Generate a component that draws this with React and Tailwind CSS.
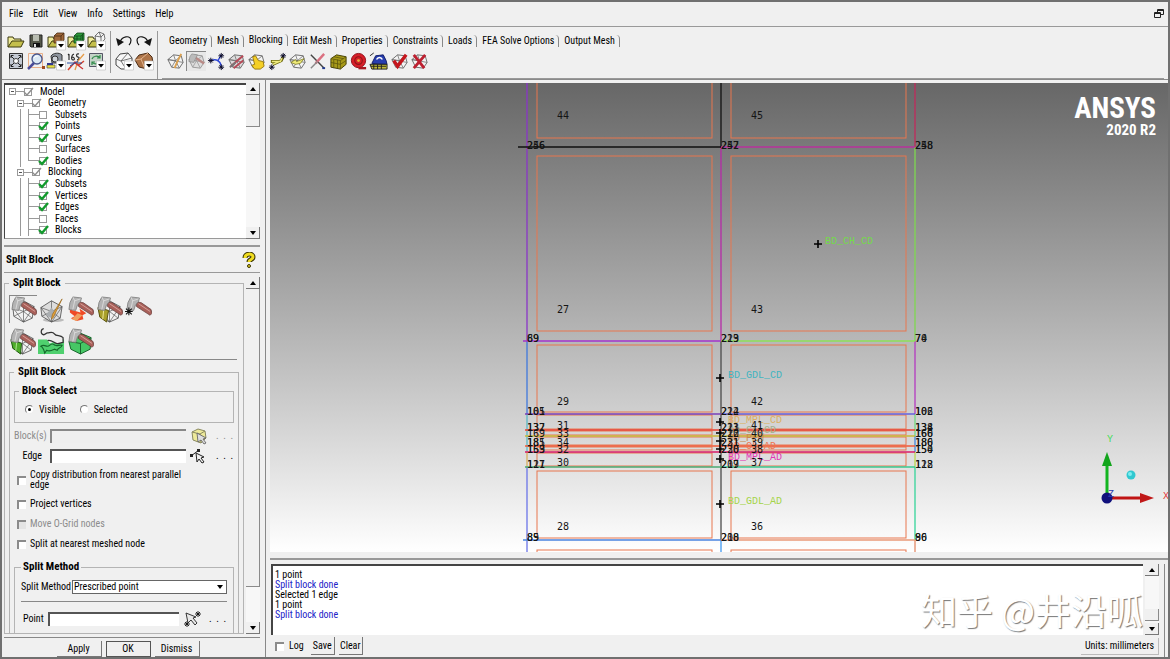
import React from 'react';

const narrow = "font-['Roboto_Condensed','Roboto','Liberation_Sans',sans-serif]";

/* ---------- icon parts ---------- */

const Svg = ({size = 20, box = 20, children}) => (
    <svg width={size} height={size} viewBox={`0 0 ${box} ${box}`} fill="none" className="shrink-0" aria-hidden="true">
        {children}
    </svg>
);

const Wire = ({stroke = '#6b6b6b', fill = '#f4f4f4'}) => (
    <g stroke={stroke} strokeWidth="1" strokeLinejoin="round">
        <path d="M2 8 8 3 16 4 18 11 14 17 6 16Z" fill={fill} />
        <path d="M2 8 10 9 16 4M10 9 14 17M10 9 6 16M2 8 18 11M8 3 10 9" strokeWidth=".8" />
    </g>
);

const Drop = () => (
    <g>
        <path d="M10.500 10h9v9h-9z" fill="#fff" stroke="#bbb" strokeWidth=".6" />
        <path d="M12 13h6l-3 3.500z" fill="#000" />
    </g>
);

const Folder = () => (
    <g stroke="#3c3a10" strokeWidth="1">
        <path d="M2 16V6h5l1 2h7v3" fill="#f0ec9a" />
        <path d="M2 16 6 10h12l-3 6Z" fill="#c4bf4c" />
    </g>
);

const Star = ({x, y}) => (
    <path d={`M${x - 3} ${y}h6M${x} ${y - 3}v6M${x - 2} ${y - 2}l4 4M${x + 2} ${y - 2}l-4 4`} stroke="#0a0a28" strokeWidth="1" />
);

const Hammer = () => (
    <g>
        <path d="m12 6 5 1 10 7 1 4-2 2-14-9z" fill="#a9605a" stroke="#5a3330" strokeWidth=".7" />
        <path d="m14 8 12 8" stroke="#d9a29b" strokeWidth="1" />
        <path d="M6 1 15 2 14 6 11 9 9 15 2 14 3 7Z" fill="#b4b4b4" stroke="#777" strokeWidth=".8" />
        <path d="M6 1 8 5 14 3M8 5 6 14" stroke="#e2e2e2" strokeWidth=".8" />
    </g>
);

const BigWire = ({fill = '#f2f2f2'}) => (
    <g stroke="#555" strokeWidth=".9" strokeLinejoin="round">
        <path d="M3 12 14 5l11 6-2 12-9 4-10-6Z" fill={fill} />
        <path d="m3 12 11 4 11-5M14 16v11M14 5v11M4 21l10-5 9 7M3 12l11 15 11-16" strokeWidth=".7" />
    </g>
);

/* ---------- toolbar icons ---------- */

const OpenIcon = () => <Svg><Folder /></Svg>;

const SaveIcon = () => (
    <Svg>
        <path d="M4 4h12v12H5l-1-1z" fill="#55584a" stroke="#222" />
        <path d="M7 4h6v6H7z" fill="#b8bcb0" />
        <path d="M7 12h7v4H7z" fill="#111" />
        <path d="M8 13h2v3H8z" fill="#ddd" />
    </Svg>
);

const OpenGeometryIcon = () => (
    <Svg>
        <Folder />
        <path d="m8 5 3-3h7v7l-3 3H8z" fill="#a0683a" stroke="#4a2c12" strokeWidth=".8" />
        <path d="M8 5h7v6M15 5l3-3" stroke="#4a2c12" strokeWidth=".8" />
        <Drop />
    </Svg>
);

const OpenMeshIcon = () => (
    <Svg>
        <Folder />
        <path d="m8 5 3-3h7v7l-3 3H8z" fill="#2f9a3c" stroke="#0d4415" strokeWidth=".8" />
        <path d="M8 5h7v6M15 5l3-3M11 5v7M8 8h7M16.500 3.500v7" stroke="#0d4415" strokeWidth=".7" />
        <Drop />
    </Svg>
);

const OpenBlockingIcon = () => (
    <Svg>
        <Folder />
        <path d="m9 5 4-4 5 2 1 5-4 4-5-1zM9 5l6 1 3-3M15 6v6M13 1l2 5" fill="#f5f5f5" stroke="#555" strokeWidth=".8" />
        <Drop />
    </Svg>
);

const FitIcon = () => (
    <Svg>
        <path d="M3.500 2.500h13v15h-13z" fill="#c4cad4" stroke="#333" />
        <circle cx="10" cy="10" r="2.500" fill="#fff" stroke="#444" />
        <path d="m5 5 3 3M15 5l-3 3M5 15l3-3M15 15l-3-3" stroke="#222" />
        <path d="M5 7V4.500h2.500M12.500 4.500H15V7M5 13v2.500h2.500M12.500 15.500H15V13" stroke="#222" />
    </Svg>
);

const ZoomIcon = () => (
    <Svg>
        <path d="M2.500 2.500h14v14h-14z" stroke="#e8b08a" />
        <path d="m8 12-6 6" stroke="#4a4a9a" strokeWidth="2.500" />
        <circle cx="11" cy="8" r="5" fill="#dbe9f5" stroke="#46548c" strokeWidth="1.300" />
        <path d="M8 7c1-2 3-2 4-2" stroke="#fff" />
        <path d="M16 15h3v3h-3z" fill="#a04a20" />
    </Svg>
);

const MeasureIcon = () => (
    <Svg>
        <path d="M5 5c2-3 8-4 11-1v8H6z" fill="#8f96a0" stroke="#333" />
        <circle cx="9" cy="8" r="3" fill="#cfd4da" stroke="#333" />
        <path d="M1 14h8v3H1z" fill="#e8e040" stroke="#555" strokeWidth=".7" />
        <path d="M1 12h6v2H1z" fill="#303890" />
        <Drop />
    </Svg>
);

const AxesIcon = () => (
    <Svg>
        <path d="M3 3v6M2 4l1-1M8 3C5 4 5 9 7 9s2-3-1-3M13 3c-3-1-3 3-1 3s1 3-1 3" stroke="#222" strokeWidth="1.100" />
        <path d="m2 19 7-8 4 3 5-4" stroke="#d8432c" strokeWidth="1.500" />
        <path d="m18 3-6 7-3 9" stroke="#e59b48" strokeWidth="1.300" />
        <path d="M1 12h15M4 15l8-5" stroke="#294fa0" />
        <path d="m9 12 8 6" stroke="#cc3030" strokeWidth="1.200" />
    </Svg>
);

const RefreshIcon = () => (
    <Svg>
        <path d="M3.500 2.500h13v13h-13z" fill="#c4d4c8" stroke="#556" />
        <path d="M6 8c1-3 6-4 8-1M14 4v3h-3M14 10c-1 3-6 4-8 1M6 14v-3h3" stroke="#2f8a49" strokeWidth="1.200" />
        <Drop />
    </Svg>
);

const UndoIcon = ({flip}) => (
    <Svg>
        <g transform={flip ? 'matrix(-1 0 0 1 20 0)' : undefined}>
            <path d="M6 11C8 5 16 4 17 9c0 2-1 4-2 5" stroke="#151515" strokeWidth="1.200" />
            <path d="m2 7 2 8 6-4z" fill="#151515" />
        </g>
    </Svg>
);

const WireViewIcon = () => (
    <Svg>
        <path d="M2 8 6 3l8-1 4 5v6l-5 5H7l-5-4z" fill="#f7f7f7" stroke="#444" />
        <path d="m2 8 5 2 7-8M7 10l5 8M7 10l11-3" stroke="#555" strokeWidth=".8" />
        <Drop />
    </Svg>
);

const SolidViewIcon = () => (
    <Svg>
        <path d="M1 9 5 4l9-2 4 4 1 6-6 6-8-2z" fill="#ad7448" stroke="#4b2d17" />
        <path d="m1 9 6-1 4 10M7 8l7-6" stroke="#e3b48d" />
        <Drop />
    </Svg>
);

/* ---------- blocking tab icons ---------- */

const blockingIcons = [
    {name: 'Create block', art: <><Wire /><path d="m16 2-4 8-3 7" stroke="#d9a050" strokeWidth="2" /></>},
    {name: 'Split block', active: true, art: <><Wire fill="#ddd" stroke="#999" /><path d="m9 6 9 6" stroke="#b98a86" strokeWidth="2.500" /><path d="m5 2 6 1-2 4-2 4-5-1 1-5z" fill="#bbb" stroke="#888" strokeWidth=".7" /></>},
    {name: 'Merge vertices', art: <><path d="M4 9c6-2 10 0 11 6M11 10l4-7" stroke="#3048d8" strokeWidth="1.500" /><Star x={4} y={9} /><Star x={15} y={4} /><Star x={15} y={16} /></>},
    {name: 'Edit block', art: <><Wire fill="#ddd" /><path d="m4 15 13-11M7 17l10-8" stroke="#b84a58" strokeWidth="2" /><path d="m3 16 6-5" stroke="#777" strokeWidth="2" /></>},
    {name: 'Associate', art: <><Wire /><path d="m6 5 3-1 3 5 5 1 1 5-4 3H8l-3-4 3-1z" fill="#f4cf26" stroke="#997a10" /></>},
    {name: 'Move vertex', art: <><path d="M3 10h10M5 13l9-4 2-4" stroke="#6d6a10" strokeWidth="3" /><path d="M4 10h9l2-4M5 13l9-4" stroke="#f0ec80" strokeWidth="1.400" /><Star x={16} y={4} /><Star x={4} y={16} /></>},
    {name: 'Transform blocks', art: <><Wire /><path d="m3 11 5-3 1 2 8-3-4 5-5 1z" fill="#eeea78" stroke="#77741c" strokeWidth=".8" /></>},
    {name: 'Edit edge', art: <><path d="m3 3 14 14" stroke="#444" strokeWidth="1.500" /><path d="M17 2 8 12" stroke="#db7080" strokeWidth="2.500" /><path d="m10 10-7 7" stroke="#888" strokeWidth="1.500" /><path d="M15 16h3v2h-3z" fill="#223c90" /></>},
    {name: 'Pre-mesh parameters', art: <><path d="m2 7 6-4 10 2v8l-6 5-10-2z" fill="#a79a18" stroke="#454006" /><path d="m2 7 10 2 6-4M12 9v9M5 5l10 2M5 8v9M9 8v9M2 11l10 2 6-4" stroke="#5b540b" strokeWidth=".8" /></>},
    {name: 'Pre-mesh quality', art: <><circle cx="10" cy="9" r="7.500" fill="#d81e28" stroke="#8e0d16" /><circle cx="10" cy="9" r="4" stroke="#8b1818" strokeWidth="1.200" /><circle cx="10" cy="9" r="1.500" fill="#e8b03c" /><path d="M10 17h8" stroke="#a81620" strokeWidth="2.500" /></>},
    {name: 'Pre-mesh smooth', art: <><path d="m3 12 4-8 8-1 3 6 1 4z" fill="#283eb0" stroke="#131e66" /><path d="M8 8c1-3 5-3 6 0" stroke="#fff" strokeWidth="1.500" /><path d="M1 13h18v5H3z" fill="#c5bd38" stroke="#222" /><path d="M5 13v5M9 13v5M13 13v5M2 15h16M1 4l4-3" stroke="#222" /></>},
    {name: 'Block checks', art: <><Wire /><path d="m4 9 4 6 9-12" stroke="#c5161d" strokeWidth="3.500" /></>},
    {name: 'Delete block', art: <><Wire /><path d="m4 3 11 14M16 3 4 17" stroke="#bd2030" strokeWidth="3" /></>},
];

/* ---------- split block tools ---------- */

const splitTools = [
    {name: 'Split block', active: true, art: <><BigWire /><Hammer /></>},
    {name: 'Ogrid block', art: <><ellipse cx="16" cy="25" rx="11" ry="2" fill="#bbb" /><BigWire fill="#ddd" /><path d="m8 20 6-8 5 7-5 4z" fill="#a9adb0" /><path d="m25 3-9 19-2 2 1-5z" fill="#e6a53c" stroke="#98661a" strokeWidth=".7" /></>},
    {name: 'Extend split', art: <><path d="M3 14 14 17l-1-4 7 5-4 2 1 4-7 2-6-3 4-2-5-4z" fill="#f04a26" /><path d="m5 24 6-6 5 2-6 6z" fill="#f0a060" /><Hammer /></>},
    {name: 'Split face', art: <><BigWire /><path d="m2 12 11 3-2 12-7-5z" fill="#a9a02a" stroke="#57510f" /><path d="m8 14-1 10" stroke="#eee89a" /><Hammer /></>},
    {name: 'Split vertices', art: <><Hammer /><path d="M0 16h8M4 12v8M1 13l6 6M7 13l-6 6" stroke="#111" strokeWidth="1.100" /></>},
    {name: 'Split free face', art: <><BigWire /><path d="m2 12 11 4-1 11-8-6z" fill="#4fae2c" stroke="#1d5a0e" /><path d="m8 14-1 10" stroke="#b5e89a" /><Hammer /></>},
    {name: 'Imprint face', art: <><path d="M0 12h10l2 4 6-2 3-2h6v15H0z" fill="#4fd06e" /><path d="M6 1c-3-1-4 6 0 6 2 0 2-2 4-2s5-2 7 1 6 1 9 4v5c-3 0-4 2-7 1s-5-4-9-3" fill="#ececec" stroke="#333" strokeWidth="1.300" /><path d="M3 19c4-3 6 2 9-1s4-1 6 0 5-1 7 0c-1 3-4 2-5 5l-3-1c-2 1-5 3-8 1l-2 3c-1-4-2-6-4-7z" stroke="#15682b" strokeWidth="1.200" /></>},
    {name: 'Split 3D block', art: <><path d="m2 14 11-9 12 5-1 12-10 5-10-5z" fill="#46c765" stroke="#16622a" /><path d="m2 14 12 2 11-6M14 16v11" stroke="#16622a" /><Hammer /></>},
];

const SelectEdgeIcon = () => (
    <Svg size={16} box={16}>
        <path d="m1 8 8-6" stroke="#222" />
        <path d="M0 6h3v3H0zM7 1h3v3H7z" fill="#222" />
        <path d="m6 5 8 4-3 1 3 4-2 1-3-4-2 3z" fill="#eee" stroke="#222" />
    </Svg>
);

const SelectBlockIcon = () => (
    <Svg size={18} box={18}>
        <path d="m2 5 6-3 7 2 1 7-5 5-8-3z" fill="#eeea9a" stroke="#8a8960" />
        <path d="m2 5 8 2 5-3M10 7l1 9" stroke="#8a8960" />
        <path d="m7 6 9 5-3 1 3 4-2 1-3-4-3 2z" fill="#ddd" stroke="#666" strokeWidth=".9" />
    </Svg>
);

const SelectPointIcon = () => (
    <Svg size={18} box={18}>
        <path d="M1 14h6M4 11v6M2 12l4 4M6 12l-4 4M12 4h6M15 1v6M13 2l4 4M17 2l-4 4" stroke="#111" strokeWidth=".9" />
        <path d="m3 3 10 4-3 1 4 5-2 2-4-5-3 3z" fill="#e8e8e8" stroke="#222" strokeWidth=".9" />
    </Svg>
);

const HelpIcon = () => (
    <Svg size={16} box={16}>
        <path d="M5 6c0-5 8-5 8-1 0 3-4 2-4 5" stroke="#3a3405" strokeWidth="5" />
        <path d="M5 6c0-5 8-5 8-1 0 3-4 2-4 5" stroke="#f0dc20" strokeWidth="3" />
        <circle cx="9" cy="14" r="1.500" fill="#e6d020" stroke="#3a3405" />
    </Svg>
);

/* ---------- small controls ---------- */

const ScrollBar = ({thumb}) => (
    <div className="flex w-[14px] shrink-0 flex-col bg-[#f7f7f7]">
        <button aria-label="Scroll up" className="grid h-3 w-full shrink-0 place-items-center border-r border-b border-[#777] bg-[#f0f0f0]">
            <svg width="6" height="4" viewBox="0 0 6 4"><path d="M0 4 3 0l3 4z" /></svg>
        </button>
        <div className={`${thumb} border-r border-b border-[#8a8a8a] bg-[#f0f0f0]`} />
        <button aria-label="Scroll down" className="mt-auto grid h-3 w-full shrink-0 place-items-center border-r border-b border-[#777] bg-[#f0f0f0]">
            <svg width="6" height="4" viewBox="0 0 6 4"><path d="m0 0 3 4 3-4z" /></svg>
        </button>
    </div>
);

const Check = ({label, disabled}) => (
    <label className={`flex items-center gap-1 ${disabled ? 'text-[#8c8c8c]' : ''}`}>
        <input
            type="checkbox"
            disabled={disabled}
            className="size-[9px] shrink-0 appearance-none border-t-2 border-l-2 border-[#8b8b8b] bg-white disabled:bg-[#e4e4e4]"
        />
        <span className="w-[164px] leading-[10px]">{label}</span>
    </label>
);

const Radio = ({label, checked}) => (
    <label className="flex items-center gap-[5px]">
        <input
            type="radio"
            name="blockSelect"
            defaultChecked={checked}
            className="grid size-[9px] appearance-none place-items-center rounded-full border border-t-[#777] border-r-[#eee] border-b-[#eee] border-l-[#777] bg-white before:size-[3px] before:rounded-full checked:before:bg-black"
        />
        {label}
    </label>
);

const fieldBox = 'h-[14px] min-w-0 border-t-2 border-l-2 border-[#555] bg-white px-1 outline-none disabled:border-[#888] disabled:bg-[#efefef]';

/* ---------- model tree ---------- */

const tree = [
    {label: 'Model', depth: 0},
    {label: 'Geometry', depth: 1},
    {label: 'Subsets', depth: 2, checked: false},
    {label: 'Points', depth: 2, checked: true},
    {label: 'Curves', depth: 2, checked: true},
    {label: 'Surfaces', depth: 2, checked: false},
    {label: 'Bodies', depth: 2, checked: true, last: true},
    {label: 'Blocking', depth: 1},
    {label: 'Subsets', depth: 2, checked: true},
    {label: 'Vertices', depth: 2, checked: true},
    {label: 'Edges', depth: 2, checked: true},
    {label: 'Faces', depth: 2, checked: false},
    {label: 'Blocks', depth: 2, checked: true},
];

const Expander = () => (
    <span className="flex items-center">
        <span className="grid size-[7px] place-items-center border border-[#999] bg-white">
            <span className="h-px w-[3px] bg-[#555]" />
        </span>
        <span className="h-px w-2 bg-[#999]" />
    </span>
);

const TreeRow = ({node}) => {
    const parent = node.depth < 2;
    return (
        <li className="flex min-h-0 flex-1 items-stretch">
            {node.depth === 0 && <span className="w-1" />}
            {node.depth === 1 && <span className="w-3" />}
            {parent && <Expander />}
            {!parent && (
                <>
                    <span className="ml-[15px] w-2 border-l border-[#999]" />
                    <span className="flex w-[11px] flex-col">
                        <span className="h-1/2 border-b border-l border-[#999]" />
                        <span className={`h-1/2 ${node.last ? '' : 'border-l border-[#999]'}`} />
                    </span>
                </>
            )}
            <label className="flex items-center">
                <span className="relative grid w-2 place-items-center">
                    <input
                        type="checkbox"
                        defaultChecked={parent || node.checked}
                        className="peer size-2 appearance-none border border-[#999] bg-white"
                    />
                    <svg
                        width="12" height="12" viewBox="0 0 12 12" fill="none"
                        className="pointer-events-none absolute hidden peer-checked:block"
                    >
                        <path d="m2 6 3 3 6-7" stroke={parent ? '#8d8d8d' : '#129a2c'} strokeWidth={parent ? 1.4 : 2.4} />
                    </svg>
                </span>
                <span className="ml-2">{node.label}</span>
            </label>
        </li>
    );
};

/* ---------- 3D view ---------- */

const lines = [
    // vertical edges
    [527, 83, 527, 341, '#8a35c8'], [527, 341, 527, 414, '#3f78dc'], [527, 414, 527, 452, '#58b8c8'], [527, 452, 527, 467, '#d8b060'], [527, 467, 527, 552, '#6a74e8'],
    [721, 83, 721, 147, '#111'], [721, 147, 721, 341, '#b62aa8'], [721, 341, 721, 540, '#4a4a4a'], [721, 540, 721, 552, '#3f98f0'],
    [915, 83, 915, 147, '#c02a5c'], [915, 147, 915, 341, '#7ed850'], [915, 341, 915, 414, '#b43ac0'], [915, 414, 915, 436, '#70d880'], [915, 436, 915, 452, '#4088e0'], [915, 452, 915, 467, '#b8d850'], [915, 467, 915, 540, '#35d49a'], [915, 540, 915, 552, '#e48a68'],
    // horizontal edges
    [518, 147, 721, 147, '#111'], [721, 147, 915, 147, '#b8329c'],
    [523, 341, 721, 341, '#a334cc'], [721, 341, 915, 341, '#8ee058'],
    [525, 414, 721, 414, '#7a40b8'], [721, 414, 915, 414, '#6660dc'],
    [525, 430, 915, 430, '#ea4030'], [525, 436, 915, 436, '#c9b838'], [525, 446, 915, 446, '#f05a38'], [525, 452, 915, 452, '#d81c68'],
    [525, 467, 721, 467, '#4aa870'], [721, 467, 915, 467, '#3ac890'],
    [523, 540, 721, 540, '#4a84e0'], [721, 540, 915, 540, '#ea9a78'],
];

const blockRows = [[70, 138], [156, 331], [345, 412], [415, 429], [431, 435], [437, 445], [447, 450], [453, 466], [471, 538], [550, 600]];

const blockNumbers = [
    [557, 115, 44], [751, 115, 45], [557, 309, 27], [751, 309, 43], [557, 401, 29], [751, 401, 42],
    [557, 425, 31], [751, 425, 41], [557, 433, 33], [751, 433, 40], [557, 442, 34], [751, 442, 39],
    [557, 449, 32], [751, 449, 38], [557, 462, 30], [751, 462, 37], [557, 526, 28], [751, 526, 36],
];

const vertexNumbers = [
    [527, 145, '256'], [527, 145, '246'], [721, 145, '257'], [721, 145, '242'], [915, 145, '258'], [915, 145, '248'],
    [527, 338, '69'], [527, 338, '89'], [721, 338, '229'], [721, 338, '213'], [915, 338, '70'], [915, 338, '74'],
    [527, 411, '105'], [527, 411, '101'], [721, 411, '224'], [721, 411, '212'], [915, 411, '106'], [915, 411, '102'],
    [527, 427, '137'], [527, 427, '132'], [721, 427, '223'], [721, 427, '211'], [915, 427, '138'], [915, 427, '134'],
    [527, 433, '169'], [721, 433, '222'], [721, 433, '210'], [915, 433, '166'], [915, 433, '160'],
    [527, 442, '185'], [527, 442, '181'], [721, 442, '221'], [721, 442, '231'], [915, 442, '186'], [915, 442, '180'],
    [527, 449, '169'], [527, 449, '153'], [721, 449, '220'], [721, 449, '230'], [915, 449, '154'], [915, 449, '150'],
    [527, 464, '121'], [527, 464, '117'], [721, 464, '219'], [721, 464, '207'], [915, 464, '122'], [915, 464, '118'],
    [527, 537, '85'], [527, 537, '89'], [721, 537, '218'], [721, 537, '200'], [915, 537, '90'], [915, 537, '86'],
];

const bodies = [
    [818, 244, 825, 241, 'BD_CH_CD', '#74dc48'],
    [720, 378, 728, 375, 'BD_GDL_CD', '#3fb4c0'],
    [720, 422, 728, 420, 'BD_MPL_CD', '#dcb060'],
    [720, 433, 728, 430, 'BD_CL_CD', '#a3b08c'],
    [720, 441, 728, 438, 'BD_PEM', '#c88a50'],
    [720, 449, 728, 446, 'BD_CL_AD', '#ee7550'],
    [720, 459, 728, 457, 'BD_MPL_AD', '#e238b4'],
    [720, 504, 728, 501, 'BD_GDL_AD', '#a4d448'],
];

const BlockingView = () => (
    <svg viewBox="270 83 898 469" preserveAspectRatio="xMidYMid slice" className="block h-full w-full" role="img" aria-label="Blocking view">
        {blockRows.map(([top, bottom]) => (
            <g key={top} fill="none" stroke="#e8764e" strokeWidth="1">
                <rect x="537" y={top} width="175" height={bottom - top} />
                <rect x="731" y={top} width="175" height={bottom - top} />
            </g>
        ))}
        {lines.map(([x1, y1, x2, y2, color], i) => (
            <line key={i} x1={x1} y1={y1} x2={x2} y2={y2} stroke={color} strokeWidth="1.3" />
        ))}
        <g className="font-['Liberation_Mono',monospace] text-[10px]">
            {bodies.map(([cx, cy, x, y, name, color]) => (
                <g key={name}>
                    <path d={`M${cx - 4} ${cy}h8M${cx} ${cy - 4}v8`} stroke="#000" strokeWidth="1.6" />
                    <text x={x} y={y + 3} fill={color}>{name}</text>
                </g>
            ))}
        </g>
        <g className="font-['DejaVu_Sans_Mono',monospace] text-[10px]" fill="#151515">
            {[...blockNumbers, ...vertexNumbers].map(([x, y, text], i) => (
                <text key={i} x={x} y={y + 4}>{text}</text>
            ))}
        </g>
        {/* triad */}
        <path d="M1107 496v-32" stroke="#12b520" strokeWidth="3" />
        <path d="m1107 452 5 14h-10z" fill="#12a51c" />
        <path d="M1109 498h32" stroke="#c01414" strokeWidth="3" />
        <path d="m1154 498-14-5v10z" fill="#c01818" />
        <circle cx="1107" cy="498" r="5.500" fill="#10107c" />
        <circle cx="1131" cy="475" r="4.500" fill="#30c8d0" />
        <circle cx="1130" cy="474" r="2" fill="#7cecf0" />
        <g className="font-['Liberation_Mono',monospace] text-[10px]">
            <text x="1107" y="442" fill="#48dc58">Y</text>
            <text x="1163" y="499" fill="#e03838">X</text>
            <text x="1108" y="497" fill="#2838b0">Z</text>
        </g>
    </svg>
);

/* ---------- page ---------- */

const tabs = ['Geometry', 'Mesh', 'Blocking', 'Edit Mesh', 'Properties', 'Constraints', 'Loads', 'FEA Solve Options', 'Output Mesh'];

const fileTools = [OpenIcon, SaveIcon, OpenGeometryIcon, OpenMeshIcon, OpenBlockingIcon, FitIcon, ZoomIcon, MeasureIcon, AxesIcon, RefreshIcon];

const log = [
    {text: '1 point'},
    {text: 'Split block done', done: true},
    {text: 'Selected 1 edge'},
    {text: '1 point'},
    {text: 'Split block done', done: true},
];

const MenuBar = () => (
    <header className="flex h-[25px] shrink-0 items-center border-b border-[#999] pr-1 pl-[7px]">
        <nav className="flex gap-[10px]">
            {['File', 'Edit', 'View', 'Info', 'Settings', 'Help'].map(item => (
                <button key={item}>{item}</button>
            ))}
        </nav>
        <button aria-label="Restore window" className="ml-auto">
            <svg width="10" height="10" viewBox="0 0 10 10" fill="none" stroke="#222">
                <path d="M3.500 3V.500h6v5H7M3 1.500h6" />
                <path d="M.500 3.500h6v5h-6zM.500 4.500h6" />
            </svg>
        </button>
    </header>
);

const ToolBar = () => (
    <div className="flex h-[53px] shrink-0 border-b border-[#8a8a8a] pt-1 pl-1">
        <div className="grid h-10 grid-cols-5 content-start">
            {fileTools.map((Icon, i) => (
                <button key={i} className="size-5"><Icon /></button>
            ))}
        </div>
        <div className="ml-[4px] grid h-[42px] grid-cols-2 content-start border-l border-[#999] pl-[3px]">
            <button aria-label="Undo" className="size-5"><UndoIcon /></button>
            <button aria-label="Redo" className="size-5"><UndoIcon flip /></button>
            <button aria-label="Wireframe" className="size-5"><WireViewIcon /></button>
            <button aria-label="Solid" className="size-5"><SolidViewIcon /></button>
        </div>
        <div className="mr-1 ml-[3px] flex min-w-0 flex-1 flex-col border-l border-[#999] pl-1">
            <div className="flex h-5 items-center pl-[2px]" role="tablist">
                {tabs.map(tab => (
                    <button
                        key={tab}
                        role="tab"
                        aria-selected={tab === 'Blocking'}
                        className="h-3 rounded-tr-sm border-r border-[#888] pr-1 pl-[5px] leading-3 whitespace-nowrap aria-selected:mb-[3px]"
                    >
                        {tab}
                    </button>
                ))}
            </div>
            <div className="flex flex-1 items-start border-b border-[#999] pl-1">
                <div className="flex w-[264px] justify-between">
                    {blockingIcons.map(icon => (
                        <button
                            key={icon.name}
                            aria-label={icon.name}
                            className={`size-5 ${icon.active ? 'border-t border-l border-[#888] bg-[#e8e8e8]' : ''}`}
                        >
                            <Svg size={19}>{icon.art}</Svg>
                        </button>
                    ))}
                </div>
            </div>
        </div>
    </div>
);

const SplitPanel = () => (
    <fieldset className="min-w-0 flex-1 border border-[#b4b4b4] px-1 pb-8">
        <legend className="px-1 text-[11px] leading-3 font-bold">Split Block</legend>
        <div className="grid grid-cols-[repeat(5,29px)] gap-y-1 pt-[6px]">
            {splitTools.map(tool => (
                <button
                    key={tool.name}
                    aria-label={tool.name}
                    className={`size-7 ${tool.active ? 'border-t border-l border-[#888]' : ''}`}
                >
                    <Svg size={27} box={28}>{tool.art}</Svg>
                </button>
            ))}
        </div>
        <hr className="mt-1 mr-[2px] border-[#888]" />

        <fieldset className="mt-[6px] border border-[#b4b4b4] px-1 pb-8">
            <legend className="px-1 text-[11px] leading-3 font-bold">Split Block</legend>
            <fieldset className="mt-[7px] border border-[#b4b4b4]">
                <legend className="ml-1 px-[3px] text-[11px] leading-3 font-bold">Block Select</legend>
                <div className="flex h-[25px] items-center gap-[14px] pl-[10px]">
                    <Radio label="Visible" checked />
                    <Radio label="Selected" />
                </div>
            </fieldset>

            <div className="mt-[3px] flex h-5 items-center">
                <label htmlFor="blocks" className="w-8 pr-1 text-right whitespace-nowrap text-[#8c8c8c]">Block(s)</label>
                <input id="blocks" disabled className={`${fieldBox} ml-1 w-[136px]`} />
                <button aria-label="Select blocks" className="ml-1"><SelectBlockIcon /></button>
                <button aria-label="More block options" className="ml-2 text-[#8c8c8c]">.&nbsp; .&nbsp; .</button>
            </div>
            <div className="flex h-5 items-center">
                <label htmlFor="edge" className="w-8 pr-1 text-right">Edge</label>
                <input id="edge" className={`${fieldBox} ml-1 w-[136px]`} />
                <button aria-label="Select edge" className="ml-1 w-[18px]"><SelectEdgeIcon /></button>
                <button aria-label="More edge options" className="ml-2">.&nbsp; .&nbsp; .</button>
            </div>

            <div className="mt-1 flex flex-col pl-[3px]">
                <div className="mb-1"><Check label="Copy distribution from nearest parallel edge" /></div>
                <div className="grid h-5 items-center"><Check label="Project vertices" /></div>
                <div className="grid h-5 items-center"><Check label="Move O-Grid nodes" disabled /></div>
                <div className="grid h-5 items-center"><Check label="Split at nearest meshed node" /></div>
            </div>

            <fieldset className="mt-[7px] border border-[#b4b4b4] px-[6px] pb-8">
                <legend className="px-[2px] text-[11px] leading-3 font-bold">Split Method</legend>
                <div className="flex h-[22px] items-center gap-1 pt-[6px]">
                    <label htmlFor="method" className="w-[47px] whitespace-nowrap">Split Method</label>
                    <div className="relative min-w-0 flex-1">
                        <select id="method" className="block h-[14px] w-full appearance-none border border-[#666] bg-white pl-px leading-3">
                            <option>Prescribed point</option>
                        </select>
                        <svg width="6" height="4" viewBox="0 0 6 4" className="pointer-events-none absolute top-[5px] right-1"><path d="m0 0 3 4 3-4z" /></svg>
                    </div>
                </div>
                <hr className="mt-[6px] border-[#888]" />
                <div className="mt-[7px] flex h-5 items-center">
                    <label htmlFor="point" className="w-6 pl-[2px]">Point</label>
                    <input id="point" className={`${fieldBox} ml-[3px] w-[131px]`} />
                    <button aria-label="Select point" className="ml-1"><SelectPointIcon /></button>
                    <button aria-label="More point options" className="ml-2">.&nbsp; .&nbsp; .</button>
                </div>
            </fieldset>
        </fieldset>
    </fieldset>
);

const SidePanel = () => (
    <aside className="flex w-[264px] shrink-0 flex-col border-r border-[#888] pt-[3px] pr-[5px] pl-[2px]">
        <div className="flex h-[156px] shrink-0">
            <ul className="flex min-w-0 flex-1 flex-col border-t-2 border-b border-l border-[#444] border-b-[#999] bg-white pt-px pb-0.5">
                {tree.map((node, i) => <TreeRow key={i} node={node} />)}
            </ul>
            <ScrollBar thumb="h-8" />
        </div>

        <div className="mt-[6px] flex h-7 shrink-0 items-center justify-between border-t-2 border-b border-[#999] pr-1 pl-[2px]">
            <h2 className="text-[11px] font-bold">Split Block</h2>
            <button aria-label="Help"><HelpIcon /></button>
        </div>

        <div className="flex min-h-0 flex-1 gap-[2px] overflow-hidden pt-1">
            <SplitPanel />
            <ScrollBar thumb="h-[298px]" />
        </div>

        <div className="mt-[3px] flex h-5 shrink-0 items-end justify-center gap-1 border-t border-[#888] pr-2">
            <button className="h-4 w-[45px] border-r border-b border-[#777] leading-3">Apply</button>
            <button className="h-4 w-[45px] border border-[#555] leading-3">OK</button>
            <button className="h-4 w-[45px] border-r border-b border-[#777] leading-3">Dismiss</button>
        </div>
    </aside>
);

const Console = () => (
    <section className="mt-[6px] flex flex-col border-t-2 border-[#999] pt-1 pr-[3px] pl-px">
        <div className="flex border-r border-[#888] pr-[5px]">
            <div className="relative h-[71px] min-w-0 flex-1 border-t-2 border-l-2 border-[#444] bg-white pt-1 pl-[2px] leading-[10px]">
                {log.map((line, i) => (
                    <p key={i} className={line.done ? 'text-[#2222c8]' : ''}>{line.text}</p>
                ))}
                <p className="absolute right-0 bottom-[3px] font-['Noto_Sans_CJK_SC',sans-serif] text-[36px] leading-[46px] whitespace-pre text-white [text-shadow:1px_1px_1px_#777]">知乎 @井沿呱</p>
            </div>
            <div className="ml-[2px] flex"><ScrollBar thumb="mt-[33px] h-3" /></div>
        </div>
        <div className="flex h-[22px] items-center border-r border-[#888] pr-[5px] pl-1">
            <label className="mr-[7px] flex items-center gap-[5px]">
                <input type="checkbox" className="size-[9px] appearance-none border-t-2 border-l-2 border-[#8b8b8b] bg-white" />
                Log
            </label>
            <button className="h-[18px] w-6 border-r border-b border-[#777]">Save</button>
            <button className="ml-1 h-[18px] w-6 border-r border-b border-[#777]">Clear</button>
            <output className="ml-auto border-r border-b border-[#bbb] px-1 py-[2px]">Units: millimeters</output>
        </div>
    </section>
);

export default function App() {
    return (
        <div className={`flex h-screen flex-col overflow-hidden border-2 border-[#707070] bg-[#f0f0f0] text-[10px] leading-3 text-black ${narrow}`}>
            <MenuBar />
            <ToolBar />
            <div className="flex min-h-0 flex-1">
                <SidePanel />
                <main className="flex min-w-0 flex-1 flex-col pt-[3px] pl-1">
                    <div className="relative min-h-0 flex-1 bg-linear-to-b from-[#676767] to-white">
                        <BlockingView />
                        <div className="absolute top-[10px] right-3 text-right font-bold text-white">
                            <p className="text-[29px] leading-[30px]">ANSYS</p>
                            <p className="text-[15px] leading-[14px]">2020 R2</p>
                        </div>
                    </div>
                    <Console />
                </main>
            </div>
        </div>
    );
}
